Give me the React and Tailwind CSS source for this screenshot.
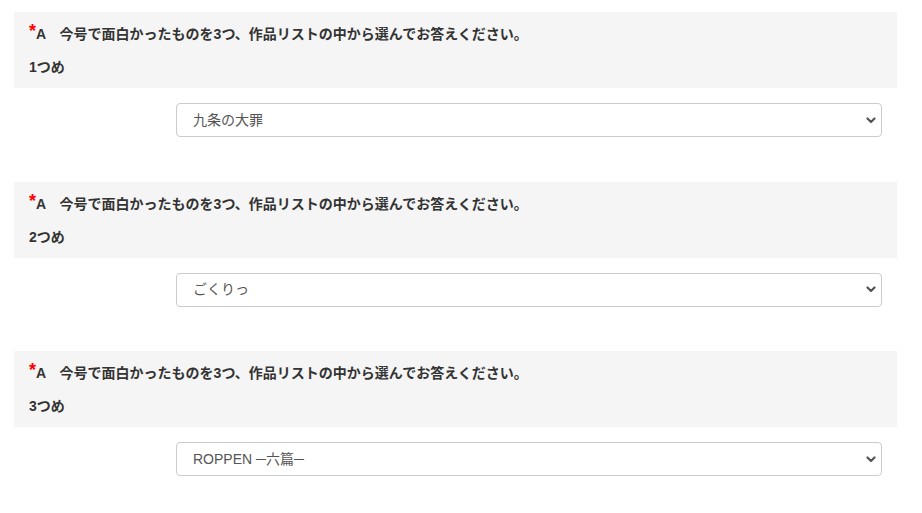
const questions = [
    { label: '1つめ', value: '九条の大罪' },
    { label: '2つめ', value: 'ごくりっ' },
    { label: '3つめ', value: 'ROPPEN ─六篇─' },
];

function Chevron() {
    return (
        <svg width="10" height="7" viewBox="0 0 10 7" className="text-[#555]">
            <path d="M1.5 1.5 L5 5 L8.5 1.5" fill="none" stroke="currentColor" strokeWidth="2.2" strokeLinecap="round" strokeLinejoin="round" />
        </svg>
    );
}

export default function App() {
    return (
        <div
            className="min-h-[513px] bg-white pt-3 pl-[14px] pr-[25px] text-[#333]"
            style={{ fontFamily: '"Liberation Sans", "Noto Sans CJK JP", sans-serif' }}
        >
            {questions.map((q) => (
                <div key={q.label} className="mb-[44.5px]">
                    <div className="h-[76px] bg-[#f5f5f5] pl-[15px] pt-[12px] text-[14px] font-bold">
                        <div className="h-[20px] leading-[20px]">
                            <span className="relative -top-[2px] text-[18px] leading-none text-[#ff0000]">*</span>
                            A　今号で面白かったものを3つ、作品リストの中から選んでお答えください。
                        </div>
                        <div className="mt-[13px] h-[20px] leading-[20px]">{q.label}</div>
                    </div>
                    <div className="mt-[15px] pl-[162px] pr-[15px]">
                        <div className="flex h-[34px] items-center justify-between rounded-[4px] border border-[#ccc] pl-[16px] pr-[5px] text-[14px] text-[#555]">
                            <span>{q.value}</span>
                            <Chevron />
                        </div>
                    </div>
                </div>
            ))}
        </div>
    );
}
